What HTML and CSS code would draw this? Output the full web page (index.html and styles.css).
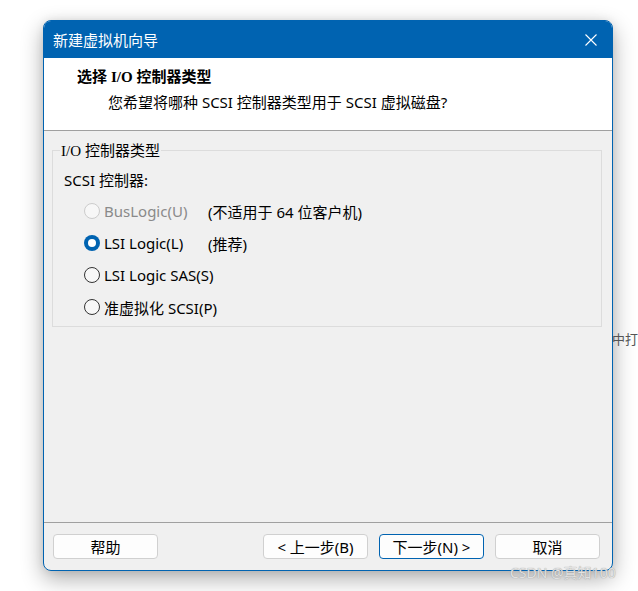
FILE: index.html
```html
<!DOCTYPE html>
<html lang="zh-CN">
<head>
<meta charset="utf-8">
<title>新建虚拟机向导</title>
<link rel="stylesheet" href="styles.css">
</head>
<body>
<div class="stage">
  <div class="window">
    <div class="titlebar">
      <span class="title">新建虚拟机向导</span>
      <svg class="close" width="12" height="12" viewBox="0 0 12 12"><path d="M0.5 0.5 L11.5 11.5 M11.5 0.5 L0.5 11.5" stroke="#ffffff" stroke-width="1.1" fill="none"/></svg>
    </div>
    <div class="header">
      <div class="h-title">选择 <span class="serif">I/O</span> 控制器类型</div>
      <div class="h-sub">您希望将哪种 SCSI 控制器类型用于 SCSI 虚拟磁盘?</div>
    </div>
    <div class="content">
      <fieldset class="group">
        <legend><span class="serif">I/O</span> 控制器类型</legend>
        <div class="field-label">SCSI 控制器:</div>
        <div class="options">
          <div class="opt disabled"><span class="radio"></span><span class="opt-label">BusLogic(U)</span><span class="note">(不适用于 64 位客户机)</span></div>
          <div class="opt"><span class="radio checked"></span><span class="opt-label">LSI Logic(L)</span><span class="note">(推荐)</span></div>
          <div class="opt"><span class="radio"></span><span class="opt-label">LSI Logic SAS(S)</span><span class="note"></span></div>
          <div class="opt"><span class="radio"></span><span class="opt-label">准虚拟化 SCSI(P)</span><span class="note"></span></div>
        </div>
      </fieldset>
    </div>
    <div class="footer">
      <button class="btn">帮助</button>
      <div class="spacer"></div>
      <button class="btn">&lt; 上一步(B)</button>
      <button class="btn default">下一步(N) &gt;</button>
      <button class="btn">取消</button>
    </div>
  </div>
  <div class="bg-text">中打</div>
  <div class="watermark">CSDN @真知100</div>
</div>
</body>
</html>
```

FILE: styles.css
```css
html, body {
  margin: 0;
  padding: 0;
  background: #ffffff;
  overflow: hidden;
}

body {
  font-family: "Noto Sans", "Noto Sans CJK SC", sans-serif;
  font-size: 15px;
  color: #000000;
}

.stage {
  position: relative;
  width: 638px;
  height: 591px;
  padding: 20px 0 0 43px;
  box-sizing: border-box;
}

.window {
  width: 570px;
  height: 551px;
  box-sizing: border-box;
  border: 1px solid #0063b1;
  border-radius: 8px;
  overflow: hidden;
  display: flex;
  flex-direction: column;
  background: #f0f0f0;
  box-shadow: 0 8px 22px rgba(0, 0, 0, 0.32), 0 0 8px rgba(0, 0, 0, 0.08);
}

.titlebar {
  height: 37px;
  flex: none;
  box-sizing: border-box;
  background: #0063b1;
  display: flex;
  align-items: center;
  justify-content: space-between;
  padding: 0 15px 0 9px;
}

.title {
  color: #ffffff;
  font-size: 15px;
  line-height: 20px;
}

.close {
  display: block;
}

.header {
  height: 73px;
  flex: none;
  box-sizing: border-box;
  background: #ffffff;
  border-bottom: 1px solid #a0a0a0;
  padding: 8px 0 0 33px;
}

.h-title {
  font-weight: 700;
  line-height: 20px;
}

.serif {
  font-family: "Liberation Serif", "Noto Sans CJK SC", serif;
}

.h-sub {
  margin-top: 5px;
  margin-left: 31px;
  line-height: 20px;
}

.content {
  flex: 1;
  padding: 10px 10px 0 8px;
}

.group {
  margin: 0;
  border: 1px solid #dcdcdc;
  padding: 10px 10px 3px 11px;
}

.group legend {
  padding: 0 1px;
  margin-left: -4px;
  line-height: 18px;
}

.field-label {
  line-height: 20px;
}

.options {
  margin-top: 5px;
  padding-left: 20px;
}

.opt {
  height: 32px;
  display: grid;
  grid-template-columns: 16px 100px auto;
  column-gap: 4px;
  align-items: center;
}

.opt-label {
  white-space: nowrap;
}

.note {
  white-space: nowrap;
}

.radio {
  width: 16px;
  height: 16px;
  box-sizing: border-box;
  border-radius: 50%;
  border: 1px solid #333333;
  background: #f7f7f7;
  position: relative;
}

.radio.checked {
  border: none;
  background: #0063b1;
}

.radio.checked::after {
  content: "";
  position: absolute;
  left: 4px;
  top: 4px;
  width: 8px;
  height: 8px;
  border-radius: 50%;
  background: #ffffff;
}

.opt.disabled .radio {
  border-color: #cccccc;
  background: #f7f7f7;
}

.opt.disabled .opt-label {
  color: #8a8a8a;
}

.footer {
  height: 48px;
  flex: none;
  box-sizing: border-box;
  border-top: 1px solid #a0a0a0;
  display: flex;
  align-items: flex-start;
  padding: 11px 12px 0 9px;
  gap: 11px;
}

.spacer {
  flex: 1;
}

.btn {
  width: 105px;
  height: 25px;
  box-sizing: border-box;
  border: 1px solid #d0d0d0;
  border-radius: 4px;
  background: #fdfdfd;
  font-family: "Noto Sans", "Noto Sans CJK SC", sans-serif;
  font-size: 15px;
  color: #000000;
  padding: 0;
  line-height: 22px;
}

.btn.default {
  border-color: #0063b1;
}

.bg-text {
  position: absolute;
  left: 612px;
  top: 330px;
  font-size: 13px;
  line-height: 18px;
  color: #555555;
  white-space: nowrap;
}

.watermark {
  position: absolute;
  left: 510px;
  top: 563px;
  font-size: 14px;
  line-height: 20px;
  color: #e2e2e2;
  white-space: nowrap;
  text-shadow: 0 0 1px #8a8a8a;
}
```
